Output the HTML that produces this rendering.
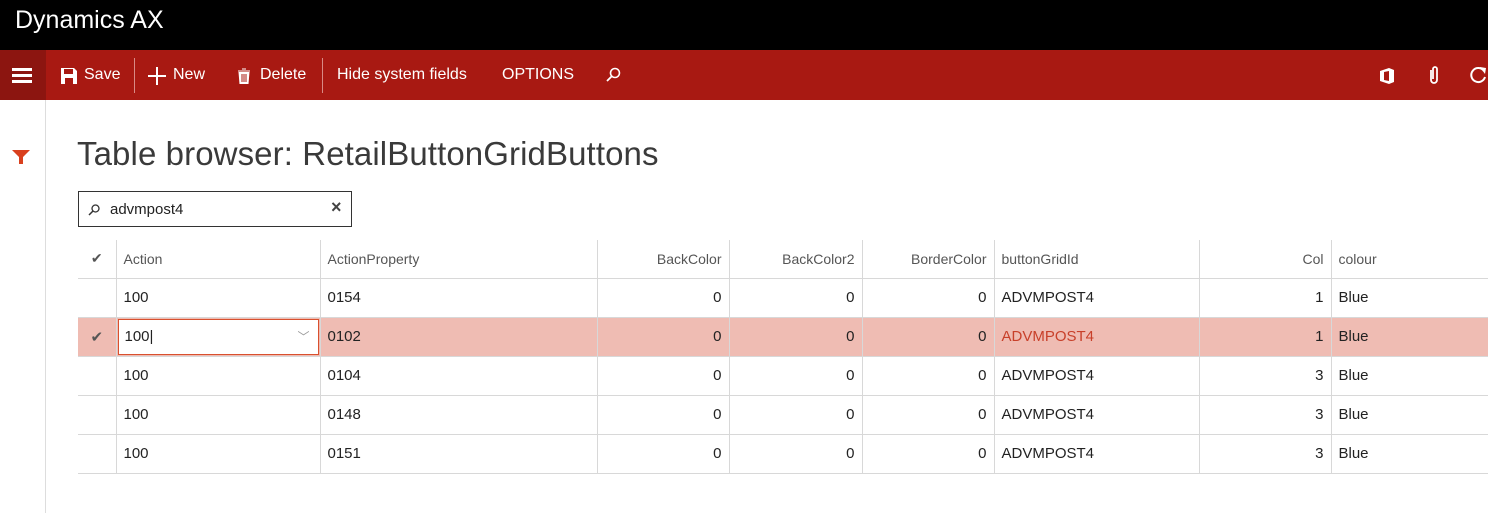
<!DOCTYPE html><html><head><style>
*{margin:0;padding:0;box-sizing:border-box}
body{width:1488px;height:513px;overflow:hidden;background:#fff;font-family:"Segoe UI","Liberation Sans",sans-serif;position:relative}
.top{position:absolute;left:0;top:0;width:1488px;height:50px;background:#000;color:#fff;font-size:25px;padding:6px 0 0 15px}
.bar{position:absolute;left:0;top:50px;width:1488px;height:50px;background:#a81912;color:#fff;font-size:16px}
.ham{position:absolute;left:0;top:0;width:46px;height:50px;background:#8c1510}
.bar span{position:absolute;top:16px;white-space:nowrap}
.sep{position:absolute;top:8px;width:1px;height:35px;background:#d98a85}
.side{position:absolute;left:0;top:100px;width:46px;height:413px;border-right:1px solid #ddd}
h1{position:absolute;left:77px;top:135px;font-weight:300;font-size:33px;color:#3a3a3a;white-space:nowrap;font-family:"Liberation Sans",sans-serif;letter-spacing:0.1px}
.search{position:absolute;left:78px;top:191px;width:274px;height:36px;border:1px solid #333;font-size:15px;color:#222}
table{position:absolute;left:78px;top:240px;border-collapse:collapse;font-size:15px;color:#222}
td,th{height:39px;border-bottom:1px solid #d8d8d8;border-left:1px solid #d8d8d8;padding:0 7px;white-space:nowrap}
th{font-weight:normal;font-size:14px;color:#555;text-align:left;height:38px}
td:first-child,th:first-child{border-left:none}
.r{text-align:right}
tr.sel td{background:#efbcb3}
</style></head><body>
<div class="top">Dynamics AX</div>
<div class="bar">
<div class="ham"><svg width="46" height="50"><g fill="#fff"><rect x="12" y="18" width="20" height="3"/><rect x="12" y="24" width="20" height="3"/><rect x="12" y="30" width="20" height="3"/></g></svg></div>
<svg style="position:absolute;left:61px;top:18px" width="16" height="16"><path d="M0 0h13l3 3v13H0z" fill="#fff"/><rect x="3" y="1" width="9" height="5" fill="#a81912"/><rect x="4" y="10" width="8" height="6" fill="#a81912"/></svg>
<span style="left:84px">Save</span><div class="sep" style="left:134px"></div>
<svg style="position:absolute;left:148px;top:17px" width="18" height="18"><path d="M9 0v18M0 9h18" stroke="#fff" stroke-width="2"/></svg>
<span style="left:173px">New</span>
<svg style="position:absolute;left:237px;top:18px" width="14" height="16"><path d="M1 3h12M5 1h4M2 4l1 12h8l1-12" fill="#fff" stroke="#fff"/><path d="M5 6v8M7 6v8M9 6v8" stroke="#a81912"/></svg>
<span style="left:260px">Delete</span><div class="sep" style="left:322px"></div>
<span style="left:337px">Hide system fields</span><span style="left:502px">OPTIONS</span>
<svg style="position:absolute;left:605px;top:17px" width="16" height="16"><circle cx="10" cy="6" r="4.5" fill="none" stroke="#fff" stroke-width="1.6"/><path d="M7 9l-5 5" stroke="#fff" stroke-width="1.8"/></svg>
<svg style="position:absolute;left:1379px;top:17px" width="16" height="18"><path d="M1 4l9-3 5 2v12l-5 2-9-3z" fill="#fff"/><path d="M5 5l5-1v10l-5-1z" fill="#a81912"/></svg>
<svg style="position:absolute;left:1427px;top:15px" width="14" height="20"><path d="M4 5v10a3 3 0 0 0 6 0V4a2 2 0 0 0-4 0v10" fill="none" stroke="#fff" stroke-width="1.8"/></svg>
<svg style="position:absolute;left:1470px;top:16px" width="18" height="18"><path d="M14 5A7 7 0 1 0 15 11" fill="none" stroke="#fff" stroke-width="2"/><path d="M10 1l6 1-1 6z" fill="#fff"/></svg>
</div>
<div class="side"><svg style="position:absolute;left:12px;top:50px" width="18" height="14"><path d="M0 0h18l-7 7v7h-4V7z" fill="#d9401e"/></svg></div>
<h1>Table browser: RetailButtonGridButtons</h1>
<div class="search"><svg style="position:absolute;left:9px;top:12px" width="12" height="12"><circle cx="7.5" cy="4.5" r="3.5" fill="none" stroke="#333" stroke-width="1.3"/><path d="M5 7l-4 4" stroke="#333" stroke-width="1.5"/></svg><span style="position:absolute;left:31px;top:9px">advmpost4</span><span style="position:absolute;left:252px;top:5px;font-size:18px;font-weight:bold;color:#444">×</span></div>
<table>
<tr><th style="width:38px;text-align:center;color:#555">✔</th><th style="width:204px">Action</th><th style="width:277px">ActionProperty</th><th class="r" style="width:132px">BackColor</th><th class="r" style="width:133px">BackColor2</th><th class="r" style="width:132px">BorderColor</th><th style="width:205px">buttonGridId</th><th class="r" style="width:132px">Col</th><th style="width:157px">colour</th></tr>
<tr><td></td><td>100</td><td>0154</td><td class="r">0</td><td class="r">0</td><td class="r">0</td><td>ADVMPOST4</td><td class="r">1</td><td>Blue</td></tr>
<tr class="sel"><td style="text-align:center;color:#555">✔</td><td style="padding:0;position:relative"><div style="position:absolute;left:1px;top:1px;right:1px;bottom:1px;background:#fff;border:1px solid #d9502e;padding:8px 6px">100|<span style="position:absolute;right:8px;top:8px;color:#999;font-size:12px">﹀</span></div></td><td>0102</td><td class="r">0</td><td class="r">0</td><td class="r">0</td><td style="color:#c8402a">ADVMPOST4</td><td class="r">1</td><td>Blue</td></tr>
<tr><td></td><td>100</td><td>0104</td><td class="r">0</td><td class="r">0</td><td class="r">0</td><td>ADVMPOST4</td><td class="r">3</td><td>Blue</td></tr>
<tr><td></td><td>100</td><td>0148</td><td class="r">0</td><td class="r">0</td><td class="r">0</td><td>ADVMPOST4</td><td class="r">3</td><td>Blue</td></tr>
<tr><td></td><td>100</td><td>0151</td><td class="r">0</td><td class="r">0</td><td class="r">0</td><td>ADVMPOST4</td><td class="r">3</td><td>Blue</td></tr>
</table>
</body></html>
